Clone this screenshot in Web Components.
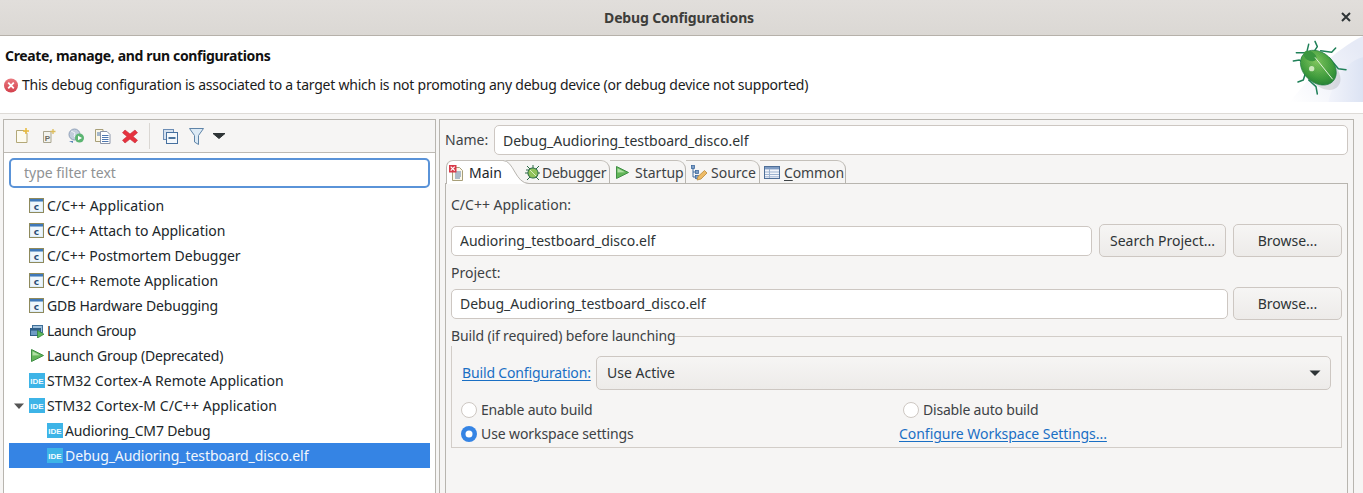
<!DOCTYPE html>
<html><head><meta charset="utf-8">
<style>
html,body{margin:0;padding:0;width:1363px;height:493px;overflow:hidden;background:#f6f5f4;}
body{font:14px/20px "Noto Sans",sans-serif;color:#2e3436;display:flex;flex-direction:column;}
</style></head><body>
<dlg-titlebar>Debug Configurations</dlg-titlebar>
<dlg-header heading="Create, manage, and run configurations">This debug configuration is associated to a target which is not promoting any debug device (or debug device not supported)</dlg-header>
<dlg-main>
  <side-panel slot="left">
    <tool-strip></tool-strip>
    <filter-box placeholder="type filter text"></filter-box>
    <tree-list>
      <tree-item icon="cfile" style="letter-spacing:.05px">C/C++ Application</tree-item>
      <tree-item icon="cfile" style="letter-spacing:-.04px">C/C++ Attach to Application</tree-item>
      <tree-item icon="cfile" style="letter-spacing:-.04px">C/C++ Postmortem Debugger</tree-item>
      <tree-item icon="cfile">C/C++ Remote Application</tree-item>
      <tree-item icon="cfile" style="letter-spacing:-.18px">GDB Hardware Debugging</tree-item>
      <tree-item icon="group" style="letter-spacing:-.33px">Launch Group</tree-item>
      <tree-item icon="play" style="letter-spacing:-.2px">Launch Group (Deprecated)</tree-item>
      <tree-item icon="ide">STM32 Cortex-A Remote Application</tree-item>
      <tree-item icon="ide" expanded style="letter-spacing:.06px">STM32 Cortex-M C/C++ Application</tree-item>
      <tree-item icon="ide" level="1" style="letter-spacing:-.15px">Audioring_CM7 Debug</tree-item>
      <tree-item icon="ide" level="1" selected style="letter-spacing:-.06px">Debug_Audioring_testboard_disco.elf</tree-item>
    </tree-list>
  </side-panel>
  <edit-panel slot="right">
    <name-row label="Name:" value="Debug_Audioring_testboard_disco.elf"></name-row>
    <tab-folder>
      <tab-item slot="tabs" icon="main" selected>Main</tab-item>
      <tab-item slot="tabs" icon="bug" w="107" pad="21" gap="0" style="letter-spacing:-.25px">Debugger</tab-item>
      <tab-item slot="tabs" icon="play" w="76" pad="4" gap="5">Startup</tab-item>
      <tab-item slot="tabs" icon="source" w="74" pad="4" gap="3">Source</tab-item>
      <tab-item slot="tabs" icon="table" w="86" pad="4" gap="4" style="letter-spacing:-.1px"><u style="text-underline-offset:2px">C</u>ommon</tab-item>
      <form-row class="label">C/C++ Application:</form-row>
      <form-row top="9">
        <text-field style="flex:0 0 641px" value="Audioring_testboard_disco.elf"></text-field>
        <push-button style="flex:0 0 127px;margin-left:7px">Search Project...</push-button>
        <push-button style="flex:0 0 109px;margin-left:7px">Browse...</push-button>
      </form-row>
      <form-row top="5" h="20" style="padding-top:1px">Project:</form-row>
      <form-row top="4">
        <text-field style="flex:0 0 777px" value="Debug_Audioring_testboard_disco.elf"></text-field>
        <push-button style="flex:0 0 109px;margin-left:5px">Browse...</push-button>
      </form-row>
      <group-box legend="Build (if required) before launching">
        <form-row>
          <link-text style="flex:0 0 134px;letter-spacing:-.15px">Build Configuration:</link-text>
          <combo-box style="flex:1">Use Active</combo-box>
        </form-row>
        <radio-grid>
          <radio-button style="letter-spacing:-.2px">Enable auto build</radio-button>
          <radio-button style="margin-left:4px;letter-spacing:-.2px">Disable auto build</radio-button>
          <radio-button checked style="letter-spacing:-.1px">Use workspace settings</radio-button>
          <link-text style="letter-spacing:-.04px">Configure Workspace Settings...</link-text>
        </radio-grid>
      </group-box>
    </tab-folder>
  </edit-panel>
</dlg-main>
<script>
const ICONS={
cfile:`<svg width="16" height="15" viewBox="0 0 16 15"><rect x=".5" y=".5" width="14" height="14" fill="#dcecf8" stroke="#8f8a5c"/><rect x="1" y="1" width="13" height="2.5" fill="#3f78b8"/><rect x="2" y="4" width="11" height="9" fill="#eef6fc"/><text x="7.500" y="12" text-anchor="middle" font-family="DejaVu Sans" font-weight="700" font-size="9" fill="#2a4f78">c</text></svg>`,
group:`<svg width="16" height="15" viewBox="0 0 16 15"><rect x="3.500" y="2.500" width="10" height="7" fill="#9fc0dc" stroke="#3f6f98"/><rect x="1.500" y="5.500" width="10" height="7" fill="#6f9cc4" stroke="#2f5f88"/><rect x="2" y="6" width="9" height="1.600" fill="#2f5f88"/><path d="M8.500 7.500 15 11.200 8.500 15z" fill="#5cb85c" stroke="#2e7d32" stroke-width=".7"/></svg>`,
play:`<svg width="16" height="15" viewBox="0 0 16 15"><path d="M2.500 1.500 14.500 7.500 2.500 13.500z" fill="#62b558" stroke="#3f8f44" stroke-width="1" stroke-linejoin="round"/><path d="M3.500 3.200v4.300L11 7.300z" fill="#b0e0a4"/></svg>`,
ide:`<svg width="16" height="15" viewBox="0 0 16 15" style="overflow:visible"><rect width="16" height="15" fill="#3db4e7"/><text x="8" y="10.800" text-anchor="middle" font-family="Liberation Sans" font-weight="700" font-size="8" fill="#f2fbff">IDE</text></svg>`,
main:`<svg width="16" height="16" viewBox="0 0 16 16"><path d="M3.500 2.500h7l3 3v10h-10z" fill="#fbf8ea" stroke="#a89f78"/><path d="M6 7h6M6 9h6M6 11h6M6 13h5" stroke="#5f7fa8"/><rect width="7.500" height="7.500" fill="#d83a48"/><path d="M1.700 1.700l4 4M5.700 1.700l-4 4" stroke="#fff" stroke-width="1.200"/></svg>`,
bug:`<svg width="18" height="16" viewBox="0 0 18 16"><g stroke="#2c6b47" stroke-width="1" fill="none"><path d="M6 4 3 1M9 3 9 0M12 4l3-3M5 8H1M13 8h3M6 12l-3 3M12 12l3 3M5 5 2 5"/></g><ellipse cx="9" cy="8" rx="5" ry="5.200" transform="rotate(-40 9 8)" fill="#8fc25a" stroke="#2c6b47"/><path d="M6 5l6 6" stroke="#d8ecc0"/></svg>`,
source:`<svg width="18" height="16" viewBox="0 0 18 16"><g fill="#7f9fc6" stroke="#3f6a9e" stroke-width=".8"><rect x="1.500" y=".5" width="3" height="3"/><rect x="5.500" y="5.500" width="3" height="3"/><rect x="5.500" y="10.500" width="3" height="3"/></g><path d="M3 3.500V12H5.500M3 7H5.500" fill="none" stroke="#3f6a9e"/><path d="M7 15l1-3.500L14.500 5.500l2.500 2.500L11 14z" fill="#eebb66" stroke="#b98a3a" stroke-width=".8"/></svg>`,
table:`<svg width="16" height="16" viewBox="0 0 16 16"><rect x=".5" y="1.500" width="15" height="12" fill="#f3f6fb" stroke="#4f6f98"/><rect x="1" y="2" width="14" height="2.400" fill="#7f9cc4"/><path d="M1 7h14M1 9.500h14M1 11.800h14M5.500 4v9" stroke="#9db3d0"/></svg>`
};
function def(name,css,html,extra){
  customElements.define(name,class extends HTMLElement{
    constructor(){super();this.attachShadow({mode:"open"});}
    connectedCallback(){
      const a=n=>this.getAttribute(n);
      this.shadowRoot.innerHTML=`<style>${css}</style>`+(typeof html==="function"?html(a,this):html);
      if(extra)extra(this,a);
    }
  });
}
def("dlg-titlebar",`:host{display:flex;align-items:center;justify-content:center;flex:0 0 36px;box-sizing:border-box;height:36px;background:linear-gradient(#e1dedb,#dbd8d4);border-bottom:1px solid #b6b1aa;font-weight:700;color:#3d3d3a;position:relative;padding-right:5px;letter-spacing:-.15px}
button{position:absolute;right:11px;top:11px;width:12px;height:12px;padding:0;border:0;background:none;display:flex}`,
`<slot></slot><button aria-label="Close"><svg width="12" height="12" viewBox="0 0 12 12"><path d="M2 2l8 8M10 2l-8 8" stroke="#2e3436" stroke-width="2"/></svg></button>`);
def("dlg-header",`:host{display:flex;flex:0 0 78px;box-sizing:border-box;height:78px;background:#fff;border-bottom:1px solid #dedbd7;color:#1b1b1b}
.t{flex:1;padding:10px 0 0 5px}.h{font-weight:700;color:#111;height:20px;letter-spacing:-.34px}.m{display:flex;align-items:center;margin-top:9px;margin-left:-1px;letter-spacing:-.23px}
.m svg{margin-right:3px;flex:none}svg.b{flex:none}`,
a=>`<div class="t"><div class="h">${a("heading")}</div><div class="m"><svg width="15" height="15" viewBox="0 0 15 15"><defs><linearGradient id="r" x1="0" y1="0" x2="0" y2="1"><stop offset="0" stop-color="#ea7a80"/><stop offset="1" stop-color="#d3404c"/></linearGradient></defs><circle cx="7" cy="7.500" r="7" fill="url(#r)"/><path d="M4.200 4.700l5.600 5.600M9.800 4.700l-5.600 5.600" stroke="#fff" stroke-width="1.800"/></svg><slot></slot></div></div>
<svg class="b" width="73" height="66" viewBox="270 108 219 198"><defs><linearGradient id="g" x1="0" y1="1" x2="1" y2="0.3"><stop offset="0" stop-color="#fff"/><stop offset="1" stop-color="#e6eaf6"/></linearGradient><linearGradient id="g2" x1="0" y1="0" x2="1" y2="0"><stop offset="0" stop-color="#f2f4fb"/><stop offset="1" stop-color="#dce3f3"/></linearGradient><radialGradient id="s" cx=".35" cy=".4" r=".75"><stop offset="0" stop-color="#84c860"/><stop offset=".65" stop-color="#3f9c3c"/><stop offset="1" stop-color="#1f7a33"/></radialGradient><pattern id="d" width="5" height="5" patternUnits="userSpaceOnUse"><circle cx="2" cy="2" r="1.100" fill="#1f7f30" opacity=".45"/></pattern></defs>
<path d="M489 108C400 150 320 240 270 306H489Z" fill="url(#g)"/><path d="M489 172C440 182 400 240 385 306H489Z" fill="url(#g2)"/>
<ellipse cx="372" cy="222" rx="56" ry="40" transform="rotate(42 372 222)" fill="#000" opacity=".1"/>
<g fill="none" stroke="#1f8058" stroke-width="4.500" stroke-linecap="round" stroke-linejoin="round"><path d="M320 158 326 133M320 158H289M344 152 352 140 345 124M362 152 395 157 407 144M388 174 415 206 438 209M312 190 298 180 280 183M318 214 310 240 294 246M326 240 348 260 352 282"/></g>
<ellipse cx="355" cy="203" rx="60" ry="45" transform="rotate(42 355 203)" fill="url(#s)" stroke="#1d7a40" stroke-width="2"/>
<ellipse cx="355" cy="203" rx="59" ry="44" transform="rotate(42 355 203)" fill="url(#d)"/>
<ellipse cx="330" cy="168" rx="21" ry="14" transform="rotate(30 330 168)" fill="#3a963f"/>
<path d="M345 172 398 238" stroke="#e2f4dc" stroke-width="3"/><circle cx="335" cy="206" r="8" fill="#dff2d0" opacity=".85"/></svg>`);
def("dlg-main",`:host{display:flex;flex:1;min-height:0;overflow:hidden;padding:5px 10px 0 3px;box-sizing:border-box;gap:3px}`,`<slot name="left"></slot><slot name="right"></slot>`);
def("side-panel",`:host{display:flex;flex-direction:column;flex:0 0 433px;box-sizing:border-box;border:1px solid #b8b5af;border-bottom:0;background:#fff;color:#1f2426}`,`<slot></slot>`);
def("tool-strip",`:host{display:flex;align-items:center;height:33px;flex:none;box-sizing:border-box;border-bottom:1px solid #bdb9b3;background:#f6f5f4;padding-left:10px}
svg{flex:none;display:block}.g{display:flex;gap:11px}.s{width:1px;height:26px;background:#dad7d3;margin:0 12px 0 11px}`,
`<div class="g">
<svg width="16" height="16" viewBox="0 0 16 16"><path d="M2.500 2.500H10l3 3v9H2.500z" fill="#fdfbef" stroke="#b3a878"/><path d="M12 0v6M9 3h6" stroke="#e8b93a" stroke-width="1.500"/></svg>
<svg width="16" height="16" viewBox="0 0 16 16"><path d="M2.500 3.500H10v11H2.500z" fill="#f3f3ee" stroke="#a9a58f"/><text x="6.300" y="12.500" text-anchor="middle" font-family="Liberation Sans" font-size="8" font-weight="700" fill="#6a6a60">P</text><path d="M12 1v5M9.500 3.500h5" stroke="#dcbc5a" stroke-width="1.300"/></svg>
<svg width="16" height="16" viewBox="0 0 16 16"><circle cx="6.500" cy="6.500" r="5.500" fill="#c2cddc" stroke="#8fa0b8"/><path d="M3 3l4 2-1 3 2 2" stroke="#eef2f7" fill="none"/><path d="M1 13l4 2v-2z" fill="#5a84b8"/><circle cx="11.500" cy="10" r="4.500" fill="#5cb572"/><path d="M10 7.800 14 10l-4 2.200z" fill="#fff"/></svg>
<svg width="16" height="16" viewBox="0 0 16 16"><path d="M.5 1.500H8v12H.5z" fill="#fbf7e6" stroke="#a89f78"/><path d="M5.500 3.500H12l3 3v9H5.500z" fill="#fff" stroke="#8b95a8"/><path d="M7 7.500h6.500M7 9.500h6.500M7 11.500h6.500M7 13.500h6.500M2 5h3M2 7h3" stroke="#4f78b0"/></svg>
<svg width="16" height="16" viewBox="0 0 16 16"><path d="M3 2 8 6 13 2 15.500 4.800l-4.500 3.700 4.500 3.700L13 15l-5-4-5 4-2.500-2.800L5 8.500.5 4.800z" fill="#e6323f" stroke="#c42a36" stroke-width=".6" stroke-linejoin="round"/></svg>
</div><div class="s"></div><div class="g" style="align-items:center">
<svg width="16" height="16" viewBox="0 0 16 16"><rect x="1.500" y="1.500" width="10" height="10" fill="#d5e1ef" stroke="#6c8db5"/><rect x="4.500" y="4.500" width="11" height="11" fill="#f4f8fc" stroke="#46709f"/><path d="M6.500 10h7" stroke="#14497e" stroke-width="1.500"/></svg>
<svg width="16" height="18" viewBox="0 0 16 18"><path d="M.5 1.500h14L9.500 8.500v9l-4-2.500V8.500z" fill="#dceaf5" stroke="#5f84a8"/></svg>
<svg width="16" height="16" viewBox="0 0 16 16" style="margin-left:-5px"><path d="M2 5.500H14L8 10.500z" fill="#2e3436" stroke="#2e3436" stroke-linejoin="round"/></svg>
</div>`);
def("filter-box",`:host{display:block;flex:none;margin:5px;height:30px}
input{box-sizing:border-box;width:100%;height:30px;border:2px solid #5a93d8;border-radius:5px;padding:0 13px 2px;font:14px "Noto Sans",sans-serif;outline:none;background:#fff;color:#2e3436}input::placeholder{color:#8f9294;opacity:1}`,
a=>`<input placeholder="${a("placeholder")}">`);
def("tree-list",`:host{display:block;margin:0 5px}`,`<slot></slot>`);
def("tree-item",`:host{display:flex;align-items:center;height:25px;color:#20262a;white-space:nowrap}
:host([selected]){background:#3584e4;color:#f2f7fd}
.t{flex:0 0 20px;display:flex;justify-content:center;box-sizing:border-box}
.i{flex:0 0 18px;display:flex;letter-spacing:0}.i svg{display:block}`,
(a,el)=>{const lv=+(a("level")||0);return `<span class="t" style="margin-left:${lv*18}px">${el.hasAttribute("expanded")?'<svg width="12" height="8" viewBox="0 0 12 8"><path d="M1 1.500H11L6 7z" fill="#555"/></svg>':''}</span><span class="i">${ICONS[a("icon")]}</span><slot></slot>`});
def("edit-panel",`:host{display:flex;flex-direction:column;flex:0 0 915px;box-sizing:border-box;border:1px solid #b8b5af;border-bottom:0;padding:5px 5px 0 5px}`,`<slot></slot>`);
def("name-row",`:host{display:flex;align-items:center;flex:none;height:30px;color:#3d4245}
span{flex:0 0 49px}text-field{flex:1}`,a=>`<span>${a("label")}</span><text-field value="${a("value")}"></text-field>`);
def("text-field",`:host{display:block;height:30px}
input{box-sizing:border-box;width:100%;height:30px;border:1px solid #cdc7c2;border-radius:5px;padding:0 8px;font:14px "Noto Sans",sans-serif;background:#fff;color:#2e3436;outline:none}`,
a=>`<input value="${a("value")}">`);
def("push-button",`:host{display:block;height:33px}
button{box-sizing:border-box;width:100%;height:33px;border:1px solid #cdc7c2;border-radius:5px;background:linear-gradient(#f6f5f4,#edebe9);font:14px "Noto Sans",sans-serif;color:#2e3436;padding:0}`,`<button><slot></slot></button>`);
def("tab-folder",`:host{display:flex;flex-direction:column;flex:1;min-height:0;margin-top:5px;width:903px}
.strip{display:flex;flex:none;height:24px;box-sizing:border-box;border-bottom:1px solid #b8b5af;padding-left:1px}
.body{flex:1;box-sizing:border-box;border:1px solid #b8b5af;border-top:0;border-bottom:0;padding:0 5px}`,
`<div class="strip"><slot name="tabs"></slot></div><div class="body"><slot></slot></div>`);
def("tab-item",`:host{display:flex;align-items:center;box-sizing:border-box;height:23px;position:relative;white-space:nowrap;color:#3d4245;border-top:1px solid #c4c0ba;border-right:1px solid #b8b5af;border-top-right-radius:9px;padding-top:1px}
:host([selected]){background:#fff;color:#20262a;height:24px;border-right:0;border-top-left-radius:7px;border-left:1px solid #b8b5af;padding-left:2px;width:57px;border-top-right-radius:0;z-index:1;padding-top:0}
.i{display:flex}
.c{position:absolute;left:100%;top:-1px}`,
(a,el)=>{if(a("w"))el.style.width=a("w")+"px";if(a("pad"))el.style.paddingLeft=a("pad")+"px";
return `<span class="i" style="margin-right:${a("gap")||4}px">${ICONS[a("icon")]}</span><slot></slot>`+(el.hasAttribute("selected")?`<svg class="c" width="26" height="24" viewBox="0 0 26 24"><path d="M0 0C11 0 12 23.500 26 23.500V24H0Z" fill="#fff"/><path d="M0 .5C11 .5 12 23.500 26 23.500" fill="none" stroke="#b8b5af"/></svg>`:"")});
def("form-row",`:host{display:flex;align-items:center;flex:none;box-sizing:content-box;color:#3d4245;white-space:nowrap}`,
(a,el)=>{if(el.className==="label"){el.style.height="20px";el.style.paddingTop="11px";}
 else if(a("h"))el.style.height=a("h")+"px"; else el.style.height=(el.closest("group-box")?34:33)+"px";
 if(a("top"))el.style.marginTop=a("top")+"px";return `<slot></slot>`});
def("group-box",`:host{display:block;margin-top:6px}
fieldset{margin:0;border:1px solid #d2cdc8;padding:10px 10px 3px 10px;color:#3d4245;display:block;min-width:0}
legend{padding:0;margin-left:-11px;height:20px;letter-spacing:-.14px}`,a=>`<fieldset><legend>${a("legend")}</legend><slot></slot></fieldset>`);
def("link-text",`:host{display:block;color:#1a6fc4;text-decoration:underline;white-space:nowrap;text-underline-offset:2px}`,`<slot></slot>`);
def("combo-box",`:host{display:flex;align-items:center;justify-content:space-between;height:34px;box-sizing:border-box;border:1px solid #cdc7c2;border-radius:5px;background:linear-gradient(#f6f5f4,#edebe9);padding:0 9px 0 10px;color:#2e3436}`,
`<slot></slot><svg width="12" height="8" viewBox="0 0 12 8"><path d="M.5 1.500H11.500L6 7z" fill="#2e3436"/></svg>`);
def("radio-grid",`:host{display:grid;grid-template-columns:438px 1fr;row-gap:4px;margin:10px 0 0 -1px}`,`<slot></slot>`);
def("radio-button",`:host{display:flex;align-items:center;height:20px;gap:4px;color:#3d4245;white-space:nowrap}svg{flex:none}`,
(a,el)=>`${el.hasAttribute("checked")?'<svg width="16" height="16" viewBox="0 0 16 16"><circle cx="8" cy="8" r="8" fill="#3584e4"/><circle cx="8" cy="8" r="3.500" fill="#fff"/></svg>':'<svg width="16" height="16" viewBox="0 0 16 16"><circle cx="8" cy="8" r="7.500" fill="#fff" stroke="#cdc7c2"/></svg>'}<slot></slot>`);
</script>
</body></html>
